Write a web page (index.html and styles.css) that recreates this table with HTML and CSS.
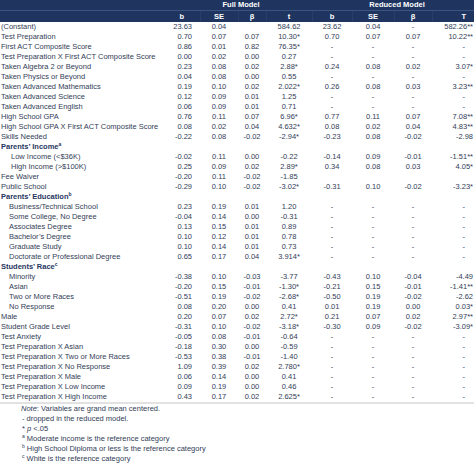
FILE: index.html
```html
<!DOCTYPE html>
<html>
<head>
<meta charset="utf-8">
<link rel="stylesheet" href="styles.css">
</head>
<body>
<table class="tbl">
  <colgroup>
    <col class="c-label"><col class="c-fb"><col class="c-fse"><col class="c-fbeta"><col class="c-ft">
    <col class="c-rb"><col class="c-rse"><col class="c-rbeta"><col class="c-rt">
  </colgroup>
  <thead>
    <tr class="h1">
      <th></th>
      <th colspan="4" class="grp">Full Model</th>
      <th colspan="4" class="grp grp-r">Reduced Model</th>
    </tr>
    <tr class="h2">
      <th></th>
      <th class="hb">b</th><th class="sep">SE</th><th class="sep">β</th><th class="sep">t</th>
      <th class="sep">b</th><th class="sep">SE</th><th class="sep">β</th><th class="sep hT">T</th>
    </tr>
  </thead>
  <tbody>
    <tr><td class="lab">(Constant)</td><td class="fb">23.63</td><td>0.04</td><td></td><td>584.62</td><td>23.62</td><td>0.04</td><td>-</td><td class="rt">582.26**</td></tr>
    <tr><td class="lab">Test Preparation</td><td class="fb">0.70</td><td>0.07</td><td>0.07</td><td>10.30*</td><td>0.70</td><td>0.07</td><td>0.07</td><td class="rt">10.22**</td></tr>
    <tr><td class="lab">First ACT Composite Score</td><td class="fb">0.86</td><td>0.01</td><td>0.82</td><td>76.35*</td><td>-</td><td>-</td><td>-</td><td class="rt dash">-</td></tr>
    <tr><td class="lab">Test Preparation X First ACT Composite Score</td><td class="fb">0.00</td><td>0.02</td><td>0.00</td><td>0.27</td><td>-</td><td>-</td><td>-</td><td class="rt dash">-</td></tr>
    <tr><td class="lab">Taken Algebra 2 or Beyond</td><td class="fb">0.23</td><td>0.08</td><td>0.02</td><td>2.88*</td><td>0.24</td><td>0.08</td><td>0.02</td><td class="rt">3.07*</td></tr>
    <tr><td class="lab">Taken Physics or Beyond</td><td class="fb">0.04</td><td>0.08</td><td>0.00</td><td>0.55</td><td>-</td><td>-</td><td>-</td><td class="rt dash">-</td></tr>
    <tr><td class="lab">Taken Advanced Mathematics</td><td class="fb">0.19</td><td>0.10</td><td>0.02</td><td>2.022*</td><td>0.26</td><td>0.08</td><td>0.03</td><td class="rt">3.23**</td></tr>
    <tr><td class="lab">Taken Advanced Science</td><td class="fb">0.12</td><td>0.09</td><td>0.01</td><td>1.25</td><td>-</td><td>-</td><td>-</td><td class="rt dash">-</td></tr>
    <tr><td class="lab">Taken Advanced English</td><td class="fb">0.06</td><td>0.09</td><td>0.01</td><td>0.71</td><td>-</td><td>-</td><td>-</td><td class="rt dash">-</td></tr>
    <tr><td class="lab">High School GPA</td><td class="fb">0.76</td><td>0.11</td><td>0.07</td><td>6.96*</td><td>0.77</td><td>0.11</td><td>0.07</td><td class="rt">7.08**</td></tr>
    <tr><td class="lab">High School GPA X First ACT Composite Score</td><td class="fb">0.08</td><td>0.02</td><td>0.04</td><td>4.632*</td><td>0.08</td><td>0.02</td><td>0.04</td><td class="rt">4.83**</td></tr>
    <tr><td class="lab">Skills Needed</td><td class="fb">-0.22</td><td>0.08</td><td>-0.02</td><td>-2.94*</td><td>-0.23</td><td>0.08</td><td>-0.02</td><td class="rt">-2.98</td></tr>
    <tr><td class="lab cat">Parents’ Income<sup>a</sup></td><td class="fb"></td><td></td><td></td><td></td><td></td><td></td><td></td><td class="rt"></td></tr>
    <tr><td class="lab ind2">Low Income (&lt;$36K)</td><td class="fb">-0.02</td><td>0.11</td><td>0.00</td><td>-0.22</td><td>-0.14</td><td>0.09</td><td>-0.01</td><td class="rt">-1.51**</td></tr>
    <tr><td class="lab ind2">High Income (&gt;$100K)</td><td class="fb">0.25</td><td>0.09</td><td>0.02</td><td>2.89*</td><td>0.34</td><td>0.08</td><td>0.03</td><td class="rt">4.05*</td></tr>
    <tr><td class="lab">Fee Waiver</td><td class="fb">-0.20</td><td>0.11</td><td>-0.02</td><td>-1.85</td><td></td><td></td><td></td><td class="rt"></td></tr>
    <tr><td class="lab">Public School</td><td class="fb">-0.29</td><td>0.10</td><td>-0.02</td><td>-3.02*</td><td>-0.31</td><td>0.10</td><td>-0.02</td><td class="rt">-3.23*</td></tr>
    <tr><td class="lab cat">Parents’ Education<sup>b</sup></td><td class="fb"></td><td></td><td></td><td></td><td></td><td></td><td></td><td class="rt"></td></tr>
    <tr><td class="lab ind">Business/Technical School</td><td class="fb">0.23</td><td>0.19</td><td>0.01</td><td>1.20</td><td>-</td><td>-</td><td>-</td><td class="rt dash">-</td></tr>
    <tr><td class="lab ind">Some College, No Degree</td><td class="fb">-0.04</td><td>0.14</td><td>0.00</td><td>-0.31</td><td>-</td><td>-</td><td>-</td><td class="rt dash">-</td></tr>
    <tr><td class="lab ind">Associates Degree</td><td class="fb">0.13</td><td>0.15</td><td>0.01</td><td>0.89</td><td>-</td><td>-</td><td>-</td><td class="rt dash">-</td></tr>
    <tr><td class="lab ind">Bachelor’s Degree</td><td class="fb">0.10</td><td>0.12</td><td>0.01</td><td>0.78</td><td>-</td><td>-</td><td>-</td><td class="rt dash">-</td></tr>
    <tr><td class="lab ind">Graduate Study</td><td class="fb">0.10</td><td>0.14</td><td>0.01</td><td>0.73</td><td>-</td><td>-</td><td>-</td><td class="rt dash">-</td></tr>
    <tr><td class="lab ind">Doctorate or Professional Degree</td><td class="fb">0.65</td><td>0.17</td><td>0.04</td><td>3.914*</td><td>-</td><td>-</td><td>-</td><td class="rt dash">-</td></tr>
    <tr><td class="lab cat">Students’ Race<sup>c</sup></td><td class="fb"></td><td></td><td></td><td></td><td></td><td></td><td></td><td class="rt"></td></tr>
    <tr><td class="lab ind">Minority</td><td class="fb">-0.38</td><td>0.10</td><td>-0.03</td><td>-3.77</td><td>-0.43</td><td>0.10</td><td>-0.04</td><td class="rt">-4.49</td></tr>
    <tr><td class="lab ind">Asian</td><td class="fb">-0.20</td><td>0.15</td><td>-0.01</td><td>-1.30*</td><td>-0.21</td><td>0.15</td><td>-0.01</td><td class="rt">-1.41**</td></tr>
    <tr><td class="lab ind">Two or More Races</td><td class="fb">-0.51</td><td>0.19</td><td>-0.02</td><td>-2.68*</td><td>-0.50</td><td>0.19</td><td>-0.02</td><td class="rt">-2.62</td></tr>
    <tr><td class="lab ind">No Response</td><td class="fb">0.08</td><td>0.20</td><td>0.00</td><td>0.41</td><td>0.01</td><td>0.19</td><td>0.00</td><td class="rt">0.03*</td></tr>
    <tr><td class="lab">Male</td><td class="fb">0.20</td><td>0.07</td><td>0.02</td><td>2.72*</td><td>0.21</td><td>0.07</td><td>0.02</td><td class="rt">2.97**</td></tr>
    <tr><td class="lab">Student Grade Level</td><td class="fb">-0.31</td><td>0.10</td><td>-0.02</td><td>-3.18*</td><td>-0.30</td><td>0.09</td><td>-0.02</td><td class="rt">-3.09*</td></tr>
    <tr><td class="lab">Test Anxiety</td><td class="fb">-0.05</td><td>0.08</td><td>-0.01</td><td>-0.64</td><td>-</td><td>-</td><td>-</td><td class="rt dash">-</td></tr>
    <tr><td class="lab">Test Preparation X Asian</td><td class="fb">-0.18</td><td>0.30</td><td>0.00</td><td>-0.59</td><td>-</td><td>-</td><td>-</td><td class="rt dash">-</td></tr>
    <tr><td class="lab">Test Preparation X Two or More Races</td><td class="fb">-0.53</td><td>0.38</td><td>-0.01</td><td>-1.40</td><td>-</td><td>-</td><td>-</td><td class="rt dash">-</td></tr>
    <tr><td class="lab">Test Preparation X No Response</td><td class="fb">1.09</td><td>0.39</td><td>0.02</td><td>2.780*</td><td>-</td><td>-</td><td>-</td><td class="rt dash">-</td></tr>
    <tr><td class="lab">Test Preparation X Male</td><td class="fb">0.06</td><td>0.14</td><td>0.00</td><td>0.41</td><td>-</td><td>-</td><td>-</td><td class="rt dash">-</td></tr>
    <tr><td class="lab">Test Preparation X Low Income</td><td class="fb">0.09</td><td>0.19</td><td>0.00</td><td>0.46</td><td>-</td><td>-</td><td>-</td><td class="rt dash">-</td></tr>
    <tr class="last"><td class="lab">Test Preparation X High Income</td><td class="fb">0.43</td><td>0.17</td><td>0.02</td><td>2.625*</td><td>-</td><td>-</td><td>-</td><td class="rt dash">-</td></tr>
  </tbody>
</table>
<div class="notes">
  <p class="note-first"><i>Note</i>: Variables are grand mean centered.</p>
  <p>- dropped in the reduced model.</p>
  <p>* <i>p</i> &lt;.05</p>
  <p><sup>a</sup> Moderate income is the reference category</p>
  <p><sup>b</sup> High School Diploma or less is the reference category</p>
  <p><sup>c</sup> White is the reference category</p>
</div>
</body>
</html>
```

FILE: styles.css
```css
html, body {
  margin: 0;
  padding: 0;
  background: #ffffff;
}
body {
  width: 474px;
  font-family: "Liberation Sans", Arial, sans-serif;
  font-size: 7.5px;
  color: #323d57;
}
.tbl {
  width: 474px;
  border-collapse: collapse;
  table-layout: fixed;
}
.c-label { width: 170px; }
.c-fb { width: 30px; }
.c-fse { width: 38px; }
.c-fbeta { width: 28px; }
.c-ft { width: 46px; }
.c-rb { width: 40px; }
.c-rse { width: 42px; }
.c-rbeta { width: 38px; }
.c-rt { width: 42px; }

thead th {
  background: #1f3560;
  color: #ffffff;
  font-weight: bold;
  padding: 0;
  white-space: nowrap;
  text-align: center;
}
.h1 th {
  height: 10px;
  line-height: 10px;
  border-bottom: 1px solid #3a5582;
}
.h2 th {
  height: 11px;
  line-height: 11px;
}
.h2 th.sep {
  border-left: 1px solid #273f6c;
}
.grp-r { padding-left: 8px; }
.hb { padding-right: 6px; }
.h2 th.hT { text-align: right; padding-right: 8px; }

tbody td {
  height: 10px;
  line-height: 10px;
  padding: 0;
  white-space: nowrap;
  text-align: center;
  overflow: visible;
}
tbody td.lab {
  text-align: left;
  padding-left: 1px;
}
tbody td.ind { padding-left: 9px; }
tbody td.ind2 { padding-left: 11px; }
tbody td.cat {
  font-weight: bold;
  color: #1f3560;
}
tbody td.fb {
  text-align: right;
  padding-right: 8px;
}
tbody td.rt {
  text-align: right;
  padding-right: 1px;
}
tbody td.rt.dash {
  padding-right: 9px;
}
tr.last td {
  border-bottom: 2px solid #e2e2e2;
}
sup {
  font-size: 5px;
  line-height: 0;
  vertical-align: 3px;
}
.notes {
  padding-left: 22px;
}
.notes p {
  margin: 0;
  height: 10px;
  line-height: 10px;
  white-space: nowrap;
}
.notes p.note-first {
  margin-left: -1px;
}
```
